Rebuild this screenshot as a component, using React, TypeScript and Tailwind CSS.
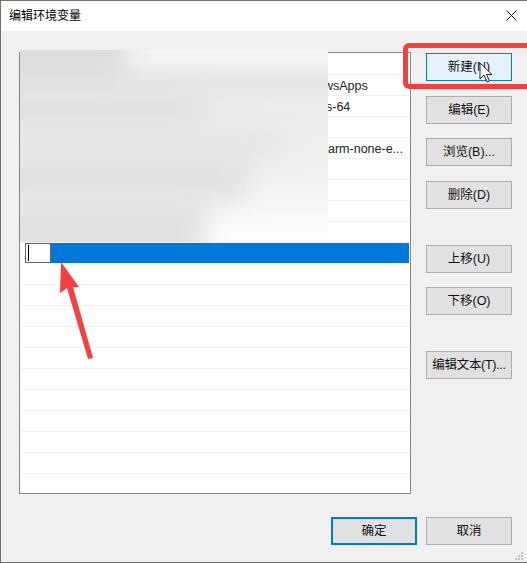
const FONT = "font-['Liberation_Sans','Noto_Sans_CJK_SC',sans-serif]";

function Btn({ label, className = "" }: { label: string; className?: string }) {
  return (
    <button className={`flex h-[28px] w-[86px] items-center justify-center border bg-[#e1e1e1] text-[12.5px] text-[#111] ${className}`}>
      {label}
    </button>
  );
}

// left = where the clipped text starts, the blur panel hides the rest of it
const rows: { text?: string; left?: string }[] = [
  {},
  { text: "wsApps", left: "left-[303px]" },
  { text: "s-64", left: "left-[305px]" },
  {},
  { text: "arm-none-e...", left: "left-[307px]" },
  {},
  {},
  {},
  {},
];

const smudges = [
  "-left-6 -top-6 h-[58px] w-[130px] bg-[#dddddd]",
  "-left-6 top-[24px] h-[20px] w-[350px] bg-[#dfdfdf]",
  "-left-6 top-[42px] h-[38px] w-[205px] bg-[#e1e1e1]",
  "-left-6 top-[78px] h-[30px] w-[290px] bg-[#e6e6e6]",
  "-left-6 top-[106px] h-[44px] w-[250px] bg-[#e1e1e1]",
  "-left-6 top-[146px] h-[70px] w-[210px] bg-[#e1e1e1]",
];

export default function App() {
  return (
    <div className={`relative h-[563px] w-[527px] overflow-hidden border-l border-t border-b border-[#6f6f6f] bg-[#f0f0f0] ${FONT}`}>
      <div className="flex h-[30px] items-center justify-between bg-white pl-[8px] pr-[9px]">
        <span className="text-[12px] text-black">编辑环境变量</span>
        <svg width="11" height="11" viewBox="0 0 11 11" className="mr-[1px] mt-[-1px]">
          <path d="M0.5 0.5L10.5 10.5M10.5 0.5L0.5 10.5" stroke="#111" strokeWidth="1" fill="none" />
        </svg>
      </div>

      <div className="flex pl-[18px] pt-[21px]">
        <div className="h-[442px] w-[392px] border border-[#82878f] bg-white">
          {rows.map((r, i) => (
            <div key={i} className={`relative ml-px border-b border-[#f0f0f0] text-[12.5px] leading-[20px] text-[#222] ${i === 0 ? "h-[22px]" : "h-[21px]"}`}>
              {r.text && <span className={`absolute top-[1px] ${r.left}`}>{r.text}</span>}
            </div>
          ))}
          <div className="mb-px ml-[5px] mr-px flex h-[20px] bg-[#0078d7]">
            <div className="flex h-[20px] w-[26px] items-center border border-[#666] bg-white pl-[2px]">
              <div className="h-[16px] w-px bg-black" />
            </div>
          </div>
          {Array.from({ length: 10 }).map((_, i) => (
            <div key={i} className="ml-px h-[21px] border-b border-[#f0f0f0]" />
          ))}
        </div>

        <div className="ml-[15px] mt-px flex flex-col">
          <Btn label="新建(N)" className="border-[#0078d7] bg-[#e5f1fb]" />
          <Btn label="编辑(E)" className="mt-[15px] border-[#adadad]" />
          <Btn label="浏览(B)..." className="mt-[14px] border-[#adadad]" />
          <Btn label="删除(D)" className="mt-[15px] border-[#adadad]" />
          <Btn label="上移(U)" className="mt-[36px] border-[#adadad]" />
          <Btn label="下移(O)" className="mt-[14px] border-[#adadad]" />
          <Btn label="编辑文本(T)..." className="mt-[36px] border-[#adadad] tracking-[-0.3px]" />
        </div>
      </div>

      <div className="ml-[330px] mt-[23px] flex gap-[9px]">
        <Btn label="确定" className="border-2 border-[#0078d7]" />
        <Btn label="取消" className="border-[#adadad]" />
      </div>

      {/* size grip */}
      <svg width="8" height="8" viewBox="0 0 8 8" className="absolute bottom-[2px] right-[4px]">
        <path d="M6 0h2v2H6zM3 3h2v2H3zM6 3h2v2H6zM0 6h2v2H0zM3 6h2v2H3zM6 6h2v2H6z" fill="#c4c4c4" />
      </svg>

      {/* blurred-out paths */}
      <div className="absolute left-[19px] top-[49px] h-[192px] w-[308px] overflow-hidden bg-[linear-gradient(180deg,#f6f6f6,#ededed_35%,#f0f0f0_65%,#ffffff)]">
        {smudges.map((s) => (
          <div key={s} className={`absolute blur-[12px] ${s}`} />
        ))}
      </div>

      {/* annotation: red box */}
      <div className="absolute left-[402px] top-[42px] h-[46px] w-[140px] rounded-[6px] border-[5px] border-[#f44040]" />

      {/* annotation: arrow */}
      <svg width="60" height="120" viewBox="0 0 60 120" className="absolute left-[49px] top-[254px]">
        <path d="M11 7L10 38L17 33L38 104L43 103L23 32L29 32Z" fill="#f44040" />
      </svg>

      {/* mouse cursor */}
      <svg width="14" height="23" viewBox="0 0 14 23" className="absolute left-[478px] top-[61px]">
        <path d="M1 1V17L5 13L8 20L10.500 19L7.500 12.500H13Z" fill="white" stroke="#222" strokeWidth="1" />
      </svg>
    </div>
  );
}
